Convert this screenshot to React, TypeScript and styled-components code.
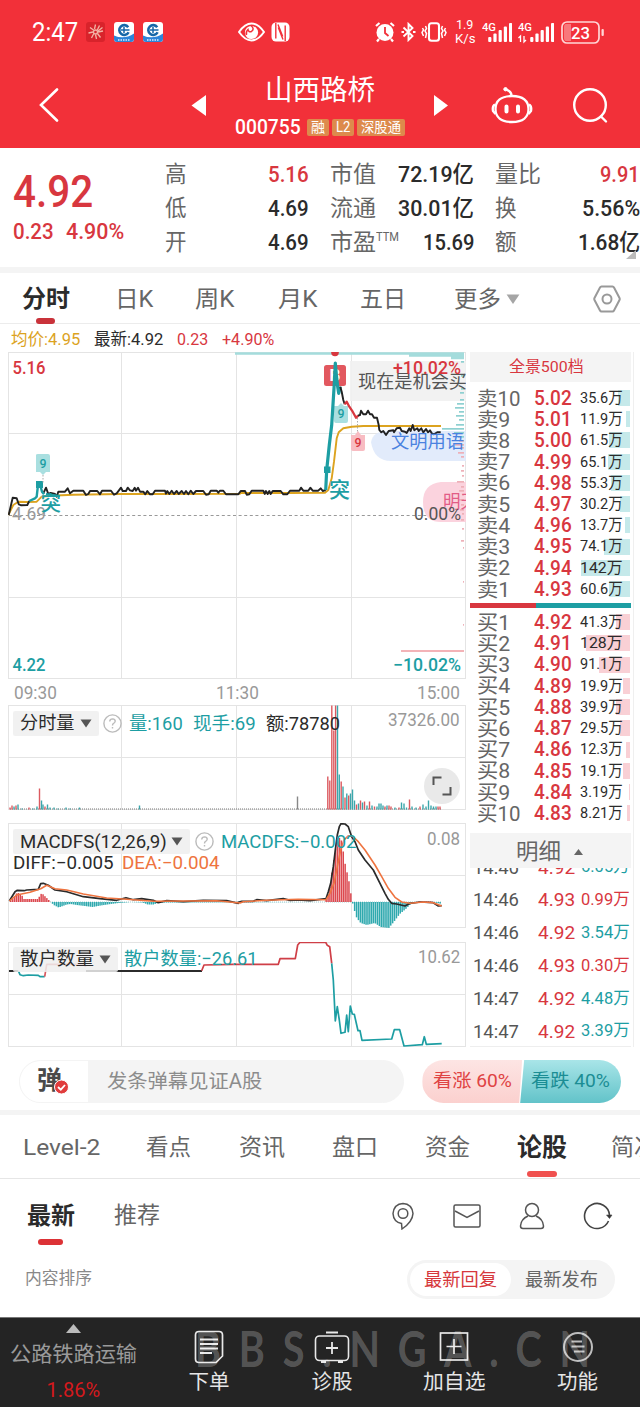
import React, { useLayoutEffect, useRef } from "react";
import styled, { createGlobalStyle } from "styled-components";

const RED = "#d8373f";
const TEAL = "#1d9ea3";
const DARK = "#2b2b2b";
const GREY = "#666";
const GOLD = "#dca31f";
const ORANGE = "#ee7440";
const FONT = `Roboto, "Noto Sans CJK SC", sans-serif`;

const Global = createGlobalStyle`
  * { box-sizing: border-box; }
  body { margin: 0; background: #fff; font-family: ${FONT}; color: ${DARK}; }
  svg { display: block; }
`;

/* ---------- condensed text that always fills its column width ---------- */
const TextBox = styled.span<{ $w: number; $size: number; $color: string; $weight: number }>`
  display: block;
  flex: none;
  width: ${(p) => p.$w}px;
  height: ${(p) => p.$size}px;
  line-height: ${(p) => p.$size}px;
  font-size: ${(p) => p.$size}px;
  font-weight: ${(p) => p.$weight};
  color: ${(p) => p.$color};
  white-space: nowrap;
`;
const TextInner = styled.span`
  display: inline-block;
  vertical-align: top;
  transform-origin: 0 50%;
`;
type TextProps = { w: number; size: number; color?: string; weight?: number; children: React.ReactNode };
function Text({ w, size, color = DARK, weight = 400, children }: TextProps) {
  const ref = useRef<HTMLSpanElement>(null);
  useLayoutEffect(() => {
    const el = ref.current;
    if (el) el.style.transform = `scaleX(${w / el.offsetWidth})`;
  }, [w, size, children]);
  return (
    <TextBox $w={w} $size={size} $color={color} $weight={weight}>
      <TextInner ref={ref}>{children}</TextInner>
    </TextBox>
  );
}

/* ---------- page and header ---------- */
const Page = styled.div`
  width: 640px;
  height: 1407px;
  overflow: hidden;
  display: flex;
  flex-direction: column;
  background: #fff;
`;
const Header = styled.header`
  height: 148px;
  flex: none;
  background: #f23039;
  padding-top: 16px;
`;
const StatusBar = styled.div`
  height: 32px;
  display: flex;
  align-items: center;
  padding-left: 32px;
`;
const Gap = styled.div<{ $w: number }>`
  width: ${(p) => p.$w}px;
  flex: none;
`;
const Speed = styled.div`
  display: flex;
  flex-direction: column;
  align-items: center;
  gap: 1px;
  width: 21px;
`;
const TitleBar = styled.div`
  height: 100px;
  display: grid;
  grid-template-columns: 190px 45px 170px 30px 57px 148px;
  align-items: start;
`;
const NavIcon = styled.div<{ $left: number; $top: number }>`
  padding-left: ${(p) => p.$left}px;
  padding-top: ${(p) => p.$top}px;
`;
const TitleBlock = styled.div`
  padding-top: 29px;
  display: flex;
  flex-direction: column;
`;
const TitleName = styled.div`
  padding-left: 30px;
`;
const CodeRow = styled.div`
  display: flex;
  align-items: center;
  margin-top: 13px;
  gap: 3px;
  height: 18px;
`;
const Tag = styled.span`
  height: 17px;
  border-radius: 2px;
  background: #dd8a4c;
  padding: 0 4px;
  display: flex;
  align-items: center;
`;

/* ---------- quote ---------- */
const Quote = styled.section`
  height: 119px;
  flex: none;
  display: grid;
  grid-template-columns: 165px 165px 165px 145px;
  position: relative;
`;
const PriceCell = styled.div`
  padding: 21px 0 0 13px;
`;
const ChangeRow = styled.div`
  display: flex;
  gap: 12px;
  margin-top: 6px;
`;
const StatCol = styled.dl<{ $w: number }>`
  margin: 0;
  padding-top: 9px;
  width: ${(p) => p.$w}px;
`;
const StatRow = styled.div`
  height: 34px;
  display: flex;
  align-items: center;
  justify-content: space-between;
`;
const LabelGroup = styled.div`
  display: flex;
  align-items: flex-start;
`;
const Corner = styled.i`
  position: absolute;
  right: 4px;
  bottom: 8px;
  border-left: 10px solid transparent;
  border-bottom: 9px solid #bbb;
`;
const Band = styled.div<{ $h: number }>`
  height: ${(p) => p.$h}px;
  flex: none;
  background: #f4f4f4;
`;

/* ---------- tabs ---------- */
const PeriodTabs = styled.nav`
  height: 51px;
  flex: none;
  display: grid;
  grid-template-columns: 93px 80px 83px 82px 94px 139px 40px;
  padding: 2px 0 0 22px;
  align-items: center;
  border-bottom: 1px solid #ececec;
`;
const Tab = styled.div<{ $mark?: string; $markTop?: number; $markLeft?: number; $markW?: number }>`
  position: relative;
  display: flex;
  align-items: center;
  gap: 5px;
  ${(p) =>
    p.$mark &&
    `&::after {
      content: "";
      position: absolute;
      left: ${p.$markLeft}px;
      top: ${p.$markTop}px;
      width: ${p.$markW}px;
      height: 6px;
      border-radius: 3px;
      background: ${p.$mark};
    }`}
`;
const InfoLine = styled.div`
  height: 28px;
  flex: none;
  display: flex;
  align-items: center;
  padding: 3px 0 0 11px;
`;

/* ---------- market area ---------- */
const Market = styled.main`
  height: 698px;
  flex: none;
  display: grid;
  grid-template-columns: 458px 164px;
  grid-template-rows: 695px;
  column-gap: 4px;
  padding-left: 8px;
`;
const Charts = styled.div`
  display: flex;
  flex-direction: column;
`;
const Axis = styled.div`
  height: 26px;
  display: flex;
  justify-content: space-between;
  align-items: center;
  padding: 1px 6px 0;
`;
const Panel = styled.div<{ $gap?: number }>`
  position: relative;
  margin-bottom: ${(p) => p.$gap ?? 0}px;
`;
const PanelHead = styled.div<{ $top: number }>`
  position: absolute;
  left: 5px;
  top: ${(p) => p.$top}px;
  display: flex;
  align-items: center;
`;
const Chip = styled.div<{ $w: number }>`
  width: ${(p) => p.$w}px;
  height: 25px;
  background: rgba(238, 238, 238, 0.85);
  border-radius: 2px;
  display: flex;
  align-items: center;
  justify-content: space-between;
  padding: 0 7px;
`;
const ScaleLabel = styled.div<{ $top: number }>`
  position: absolute;
  right: 6px;
  top: ${(p) => p.$top}px;
`;
const SubHead = styled.div`
  position: absolute;
  left: 5px;
  top: 31px;
  display: flex;
  gap: 9px;
`;
const Expand = styled.div`
  position: absolute;
  right: 6px;
  top: 63px;
  width: 36px;
  height: 36px;
  border-radius: 50%;
  background: #e9e9e9;
  display: grid;
  place-items: center;
`;

const Book = styled.aside`
  display: flex;
  flex-direction: column;
  min-height: 0;
  border-right: 1px solid #efefef;
  padding-right: 2px;
`;
const BookHead = styled.div<{ $h: number; $shift?: number }>`
  height: ${(p) => p.$h}px;
  flex: none;
  background: #f4f4f4;
  display: flex;
  align-items: center;
  justify-content: center;
  gap: 13px;
  padding-right: ${(p) => p.$shift ?? 0}px;
  padding-top: 2px;
`;
const Levels = styled.div<{ $top: number; $bottom?: number }>`
  padding-top: ${(p) => p.$top}px;
  padding-bottom: ${(p) => p.$bottom ?? 0}px;
`;
const Level = styled.div`
  height: 21.22px;
  display: grid;
  grid-template-columns: 57px 46px 50px;
  padding-left: 7px;
  align-items: center;
  position: relative;
`;
const Depth = styled.i<{ $w: number; $bg: string }>`
  position: absolute;
  right: 1px;
  top: 2px;
  height: 16px;
  width: ${(p) => p.$w}px;
  background: ${(p) => p.$bg};
`;
const Ratio = styled.div`
  height: 5px;
  margin-top: 3px;
  display: grid;
  grid-template-columns: 66px 95px;
`;
const RatioPart = styled.i<{ $bg: string }>`
  background: ${(p) => p.$bg};
`;
const Trades = styled.div`
  flex: 1;
  min-height: 0;
  overflow: hidden;
  display: flex;
  flex-direction: column;
  justify-content: flex-end;
  border-bottom: 1px solid #eee;
`;
const Trade = styled.div`
  height: 32.8px;
  flex: none;
  display: grid;
  grid-template-columns: 65px 43px 50px;
  padding-left: 3px;
  align-items: center;
  &:last-child { margin-bottom: -2px; }
`;

/* ---------- comment bar ---------- */
const CommentBar = styled.div`
  height: 60px;
  flex: none;
  display: flex;
  padding: 10px 19px 0;
`;
const CommentInput = styled.div`
  width: 386px;
  height: 43px;
  border-radius: 22px;
  background: #f4f4f4;
  overflow: hidden;
  display: flex;
  align-items: center;
  border: 1px solid #f4f4f4;
`;
const BulletToggle = styled.div`
  width: 68px;
  height: 43px;
  background: #fff;
  padding: 2px 0 0 16px;
  margin-right: 19px;
`;
const VoteGroup = styled.div`
  margin-left: 18px;
  width: 199px;
  height: 43px;
  border-radius: 22px;
  overflow: hidden;
  display: flex;
`;
const Vote = styled.div<{ $up?: boolean }>`
  width: ${(p) => (p.$up ? 100 : 102)}px;
  height: 43px;
  margin-left: ${(p) => (p.$up ? 0 : -3)}px;
  display: flex;
  align-items: center;
  padding-left: ${(p) => (p.$up ? 11 : 12)}px;
  background: ${(p) =>
    p.$up ? "linear-gradient(#fde5e4, #fbd0ce)" : "linear-gradient(#a9e5e8, #62c3c9)"};
  clip-path: ${(p) =>
    p.$up ? "polygon(0 0, 100% 0, 97% 100%, 0 100%)" : "polygon(5px 0, 100% 0, 100% 100%, 1px 100%)"};
`;

/* ---------- forum ---------- */
const ForumTabs = styled.nav`
  height: 64px;
  flex: none;
  display: grid;
  grid-template-columns: 123px 93px 93px 93px 92px 94px 60px;
  padding: 2px 0 0 23px;
  align-items: center;
  border-bottom: 1px solid #e6e6e6;
`;
const FilterRow = styled.div`
  height: 73px;
  flex: none;
  display: grid;
  grid-template-columns: 87px 277px 62px 66px 64px 40px;
  padding-left: 27px;
  align-items: center;
`;
const SortRow = styled.div`
  height: 65px;
  flex: none;
  display: flex;
  justify-content: space-between;
  padding: 8px 25px 0 25px;
`;
const SortLabel = styled.div`
  padding-top: 11px;
`;
const Segmented = styled.div`
  width: 208px;
  height: 39px;
  border-radius: 20px;
  background: #f4f4f4;
  padding: 3px;
  display: flex;
`;
const Segment = styled.div<{ $on?: boolean }>`
  width: 101px;
  height: 33px;
  border-radius: 17px;
  background: ${(p) => (p.$on ? "#fff" : "transparent")};
  display: flex;
  align-items: center;
  padding-left: 14px;
`;

/* ---------- bottom bar ---------- */
const BottomBar = styled.footer`
  height: 90px;
  flex: none;
  position: relative;
  background: #242424;
  border-top: 1px solid #777;
  display: grid;
  grid-template-columns: 147px 124px 122px 122px 125px;
`;
const Sector = styled.div`
  display: flex;
  flex-direction: column;
  align-items: center;
  padding-top: 6px;
`;
const SectorName = styled.div`
  margin: 11px 0 15px;
`;
const Action = styled.div`
  display: flex;
  flex-direction: column;
  align-items: center;
  padding-top: 12px;
  gap: 8px;
`;
const Watermark = styled.div`
  position: absolute;
  left: 195px;
  top: 6px;
  font-family: Lato, sans-serif;
  letter-spacing: 22px;
  pointer-events: none;
`;

/* ---------- svg helpers ---------- */
type P = [number, number][];
const line = (pts: P) => pts.map(([x, y]) => `${x.toFixed(1)},${y.toFixed(1)}`).join(" ");
const at = (ox: number, oy: number, s: string): P =>
  s.split(" ").map((t) => {
    const [a, b] = t.split(",").map(Number);
    return [ox + a / 3, oy + b / 3];
  });

function Label(p: { x: number; y: number; w: number; size: number; fill: string; weight?: number; children: string }) {
  return (
    <text
      x={p.x}
      y={p.y + p.size * 0.36}
      textLength={p.w}
      lengthAdjust="spacingAndGlyphs"
      fontSize={p.size}
      fill={p.fill}
      fontWeight={p.weight ?? 400}
    >
      {p.children}
    </text>
  );
}

function Grid({ top, bottom, rows }: { top: number; bottom: number; rows: number[] }) {
  return (
    <g stroke="#e4e4e4" strokeWidth="1" fill="none">
      <rect x="8.5" y={top + 0.5} width="457" height={bottom - top - 1} />
      {[121.5, 236.5, 351.5].map((x) => (
        <line key={x} x1={x} x2={x} y1={top} y2={bottom} />
      ))}
      {rows.map((y) => (
        <line key={y} x1="8" x2="466" y1={y} y2={y} />
      ))}
    </g>
  );
}

/* ---------- price chart ---------- */
const priceOpen = at(0, 345, "26,510 38,458 50,460 56,478 64,481 82,480 88,468");
const priceRise = at(0, 345, "88,468 105,460 110,455 114,420 120,418 126,440 132,448");
const priceFlat = [
  ...at(
    0,
    345,
    "130,445 138,428 145,447 152,444 165,447 170,455 175,440 195,440 203,430 210,445 220,437 250,437 258,450 265,447 270,438 292,438 300,448 306,437 333,437 342,449 350,445 363,428 368,438 378,438 383,428 390,436 398,438 404,428 408,437 414,428 420,440 430,440 436,448 442,438 450,448 458,448 465,437 495,437 498,446 502,438 508,447 515,437 522,447 530,438 536,447 545,438 552,447 558,438 565,448 572,437 580,447 588,438 610,438 618,449 626,448 632,437 650,437 655,443 660,437 670,437 678,448 715,448"
  ),
  ...at(
    230,
    345,
    "25,448 32,438 45,438 50,449 58,448 65,437 100,437 104,447 108,438 113,447 118,438 122,447 128,438 152,438 160,448 172,448 180,437 208,437 213,428 220,437 235,437 241,428 248,437 265,437 272,430 278,438 287,435"
  ),
];
const priceSurge = at(230, 345, "287,435 290,375 298,300 305,240 312,130 316,54 320,100 323,125 326,145 331,125");
const priceDrop = at(230, 345, "331,125 335,140 340,165 344,178");
const priceRed = at(230, 345, "344,178 350,170 358,185 368,200 378,218 385,212");
const priceTail = at(
  230,
  345,
  "384,212 390,210 393,197 400,208 408,208 414,197 420,208 426,208 432,218 441,218 446,240 448,255 454,262 460,258 468,270 476,258 490,256 492,262 500,250 510,248 515,258 525,260 530,264 538,250 542,258 548,240 553,256 562,250 566,258 574,250 580,262 588,252 594,262 600,256 605,265 612,268 622,262 632,262"
);
const average = [
  ...at(0, 345, "25,510 40,480 55,470 80,471 110,470 125,455 150,452 220,449 360,447 500,447 720,446"),
  ...at(230, 345, "30,444 180,444 285,443 295,435 305,400 312,350 320,280 326,262 340,250 365,245 400,243 633,243"),
];
const ladder: [number, number, string][] = [
  [361, 3, "t"], [375, 3, "t"], [388, 3, "t"], [392, 4, "t"], [399, 4, "t"], [403, 7, "t"], [407, 9, "t"],
  [411, 5, "t"], [415, 8, "t"], [419, 5, "t"], [424, 8, "t"], [428, 22, "t"], [432, 10, "t"], [436, 6, "t"],
  [440, 5, "r"], [444, 9, "r"], [447, 4, "r"], [452, 6, "r"], [456, 3, "r"], [465, 2, "r"], [470, 3, "r"],
  [475, 2, "r"], [481, 7, "r"], [486, 3, "r"], [490, 5, "r"], [494, 2, "r"], [499, 5, "r"], [504, 3, "r"],
  [509, 4, "r"], [513, 2, "r"], [519, 3, "r"], [528, 2, "r"], [540, 3, "r"], [547, 1, "r"], [581, 1, "r"], [624, 1, "r"],
];

function PriceChart() {
  return (
    <svg width="458" height="327" viewBox="8 352 458 327" fontFamily={FONT}>
      <Grid top={352} bottom={679} rows={[433.5, 597.5]} />
      <line x1="9" x2="464" y1="515.5" y2="515.5" stroke="#999" strokeDasharray="3 2.6" />
      <path d="M235 353.5H464M409 355.5H464M451 358H464" stroke="#a4dcdc" strokeWidth="2.4" />
      <rect x="350" y="361" width="116" height="40" fill="#f1f1f1" fillOpacity=".9" />
      <path d="M466 431H388Q373 431 371 442Q374 461 391 461H466Z" fill="#dfe9fb" fillOpacity=".9" />
      <path d="M466 482H441Q423 484 423 502Q423 522 441 522H466Z" fill="#fbd3de" />
      {ladder.map(([y, w, c]) => (
        <rect key={y} x={464 - w} y={y} width={w} height="1.7" fill={c === "t" ? "#8ed0d1" : "#eeb0b8"} />
      ))}
      <line x1="401" x2="464" y1="651" y2="651" stroke="#ef9a9f" strokeWidth="1.6" />
      <g fill="none" strokeLinejoin="round" strokeWidth="1.9">
        <polyline points={line(average)} stroke={GOLD} />
        <polyline points={line(priceOpen)} stroke="#222" />
        <polyline points={line(priceFlat)} stroke="#222" />
        <polyline points={line(priceRise)} stroke={TEAL} strokeWidth="2.4" />
      </g>
      <path d="M46 494L60 496" stroke={TEAL} strokeWidth="2" />
      <rect x="36" y="481" width="7" height="7" fill={TEAL} />
      <path d="M43 475V484M357.5 418V433" stroke="#aaa" strokeDasharray="1.5 1.5" />
      <path d="M36 455Q36 454 38 454H48Q50 454 50 456V472H46L43 475L40 472H36Z" fill="#a9dfe0" />
      <Label x={39.5} y={463} w={7} size={13} fill={TEAL} weight={500}>9</Label>
      <rect x="324" y="365" width="22" height="21" rx="2.5" fill="#e2585f" />
      <Label x={329.5} y={375.5} w={11} size={16} fill="#fff" weight={700}>B</Label>
      <path d="M334 406H338L341 403L344 406H348V421Q348 423 346 423H336Q334 423 334 421Z" fill="#a9dfe0" />
      <Label x={337.5} y={413} w={7} size={13} fill={TEAL} weight={500}>9</Label>
      <path d="M351 435H355L358 431L361 435H365V449Q365 451 363 451H353Q351 451 351 449Z" fill="#f8bcc2" />
      <Label x={354.5} y={442} w={7} size={13} fill={RED} weight={500}>9</Label>
      <circle cx="335" cy="352.5" r="3.8" fill={RED} />
      <g fill="none" strokeLinejoin="round" strokeWidth="1.9">
        <polyline points={line(priceSurge)} stroke={TEAL} strokeWidth="3.2" />
        <polyline points={line(priceDrop)} stroke="#222" />
        <polyline points={line(priceRed)} stroke={RED} strokeWidth="2.3" />
        <polyline points={line(priceTail)} stroke="#222" />
      </g>
      <rect x="324" y="466.5" width="6.5" height="6.5" fill={TEAL} />
      <Label x={12} y={513.5} w={34} size={18} fill="#999">4.69</Label>
      <Label x={40.5} y={504} w={20.5} size={20.5} fill={TEAL} weight={500}>突</Label>
      <Label x={329} y={489} w={21} size={21} fill={TEAL} weight={500}>突</Label>
      <Label x={358} y={381} w={109} size={18.5} fill="#555">现在是机会买</Label>
      <Label x={391} y={442} w={73} size={18} fill="#4a82e0">文明用语</Label>
      <Label x={443} y={502} w={35} size={18} fill="#e25c86">明天</Label>
      <Label x={12.5} y={367.5} w={33} size={18} fill={RED} weight={500}>5.16</Label>
      <Label x={393} y={367.5} w={68} size={18} fill={RED} weight={500}>+10.02%</Label>
      <Label x={12.5} y={664.5} w={33} size={18} fill={TEAL} weight={500}>4.22</Label>
      <Label x={393} y={664.5} w={68} size={18} fill={TEAL} weight={500}>−10.02%</Label>
      <Label x={414} y={514} w={47} size={18} fill="#555">0.00%</Label>
    </svg>
  );
}

/* ---------- volume chart ---------- */
const bars: [number, number, string][] = [
  [10, 2, "r"], [12, 4, "r"], [14, 3, "t"], [16, 4, "r"], [18, 5, "t"], [22, 1, "t"], [29, 2, "r"], [33, 1, "t"], [37, 3, "t"],
  [39.5, 21, "r"], [41.5, 9, "t"], [43, 5, "t"], [45, 3, "r"], [47.5, 5, "t"], [50, 2, "t"], [54, 2, "t"], [58, 1, "t"], [66, 2, "t"],
  [70, 1, "t"], [79.5, 2, "t"], [139.5, 4, "t"], [297.5, 13, "k"],
  [327.8, 33, "r"], [329.8, 29, "r"], [331.8, 104, "r"], [333.8, 79, "r"], [335.6, 104, "r"], [337.5, 104, "t"], [339.3, 35, "t"],
  [341.2, 28, "r"], [343, 23, "t"], [345, 12, "r"], [346.8, 16, "t"], [348.7, 14, "r"], [350.5, 16, "t"], [352.5, 20, "t"],
  [354.5, 9, "t"], [356.5, 5, "r"], [358.5, 6, "t"], [360.5, 9, "r"], [362.5, 7, "t"], [364.5, 8, "r"], [367, 4, "t"], [369.5, 8, "r"],
  [372, 4, "t"], [374.5, 3, "r"], [377, 3, "t"], [379, 6, "t"], [381, 6, "t"], [383, 4, "t"], [385, 3, "r"], [387, 4, "t"], [389, 4, "r"], [391, 3, "r"],
  [395, 2, "t"], [399, 2, "r"], [401.5, 7, "t"], [404, 6, "t"], [406.5, 2, "t"], [409.5, 10, "r"], [412, 3, "t"], [416, 2, "t"], [420, 3, "r"],
  [423, 5, "t"], [426, 3, "t"], [428.5, 9, "t"], [431, 4, "t"], [433.5, 3, "t"], [436, 3, "t"], [438, 3, "r"], [440, 3, "r"],
];
const barColor: Record<string, string> = { r: "#dc5a60", t: "#3ba7ac", k: "#888" };

function VolumeChart() {
  return (
    <svg width="458" height="105" viewBox="8 705 458 105">
      <Grid top={705} bottom={810} rows={[757.5]} />
      <line x1="10" x2="441" y1="809" y2="809" stroke="#777" strokeWidth="1" strokeDasharray="1 1" />
      {bars.map(([x, h, c]) => (
        <rect key={x} x={x - 0.7} y={809.5 - h} width="1.4" height={h} fill={barColor[c]} />
      ))}
    </svg>
  );
}

/* ---------- MACD chart ---------- */
const interp = (pts: P, x: number) => {
  for (let i = 1; i < pts.length; i++)
    if (x <= pts[i][0]) {
      const [a, b] = [pts[i - 1], pts[i]];
      return a[1] + ((x - a[0]) / (b[0] - a[0])) * (b[1] - a[1]);
    }
  return 0;
};
const histEnvelope: P = [
  [9, 1], [12, 3], [16, 9], [18, 9], [21, 7], [23, 3], [30, 3], [37, 3], [41, 9], [44, 6], [48, 2], [50, 0], [53, -3], [58, -5.5],
  [66, -2.5], [70, -2], [76, -3], [84, -4], [92, -5], [100, -3.5], [110, -2], [118, -1], [130, 0], [142, -0.5], [147, -2.5],
  [153, -2.5], [158, -0.5], [324, 0], [326, 3], [329, 14], [332, 36], [335, 54], [338, 65], [341, 61], [344, 40], [348, 22], [351, 3],
  [353, -6], [356, -16], [360, -21], [366, -23], [374, -21], [380, -25], [388, -26], [393, -20], [399, -12], [405, -7], [410, -2], [418, 0.5], [430, 0.5], [441, -2],
];
const diffLine: P = [
  ...at(0, 700, "28,603 45,575 52,571 72,572 80,570 115,568 122,551 130,550 145,556 165,570 200,575 250,590 300,596 350,601 378,593 400,599 425,596 460,601 475,608 500,602 550,605 610,601 680,602 715,610"),
  ...at(230, 700, "20,608 35,604 70,604 80,599 110,602 160,596 180,601 205,600 240,602 288,596 295,575 302,550 310,500 316,450 322,405 328,380 333,371 345,372 355,380 365,410 375,425 385,450 405,480 430,510 450,550 465,580 475,598 485,610 500,612 525,618 540,610 570,606 610,608 625,618 635,617"),
];
const deaLine: P = [
  ...at(0, 700, "28,603 50,585 90,577 122,566 140,556 165,566 200,570 250,582 320,594 380,598 460,604 560,603 650,602 720,609"),
  ...at(230, 700, "40,605 110,601 205,598 288,599 300,580 312,550 322,500 332,450 342,420 355,407 367,408 385,425 405,450 435,495 455,530 475,565 495,592 515,606 540,610 580,606 610,608 635,618"),
];

function MacdChart() {
  const hist: P = [];
  for (let x = 10; x <= 441; x += 1.9) hist.push([x, interp(histEnvelope, x)]);
  return (
    <svg width="458" height="105" viewBox="8 823 458 105">
      <Grid top={823} bottom={928} rows={[875.5]} />
      <line x1="50" x2="441" y1="902" y2="902" stroke="#7fbcbe" strokeWidth=".7" strokeDasharray="1 1" />
      {hist.map(([x, v]) => (
        <rect key={x} x={x} y={v > 0 ? 902 - v : 902} width="1.5" height={Math.abs(v)} fill={v > 0 ? "#dc484f" : "#2fa9ae"} />
      ))}
      <polyline points={line(diffLine)} fill="none" stroke="#2b2b2b" strokeWidth="1.7" strokeLinejoin="round" />
      <polyline points={line(deaLine)} fill="none" stroke={ORANGE} strokeWidth="1.6" strokeLinejoin="round" />
    </svg>
  );
}

/* ---------- retail holders chart ---------- */
function RetailChart() {
  const tealA = at(0, 700, "55,812 60,824 70,827 85,825 115,826 120,830 134,830");
  const redA = at(0, 700, "134,830 140,793 250,793 258,800");
  const redB = [...at(0, 700, "605,812 612,795"), ...at(230, 700, "8,793 145,793 150,776 196,776 203,735 210,727 287,727 292,736 299,740 305,790")];
  const fall = at(
    230,
    700,
    "305,790 310,840 313,900 316,963 322,920 328,960 333,1000 345,997 350,945 355,995 361,918 367,942 373,943 384,992 390,992 396,1021 485,1017 493,989 509,989 522,1038 577,1034 583,1010 589,1033 635,1031"
  );
  return (
    <svg width="458" height="105" viewBox="8 942 458 105">
      <Grid top={942} bottom={1047} rows={[994.5]} />
      <g fill="none" strokeWidth="1.7" strokeLinejoin="round">
        <path d="M9 971H18M86 971H202" stroke="#2b2b2b" strokeWidth="2" />
        <polyline points={line(tealA)} stroke={TEAL} />
        <polyline points={line(redA)} stroke="#d75a60" />
        <polyline points={line(redB)} stroke="#cf3f47" />
        <polyline points={line(fall)} stroke={TEAL} />
      </g>
    </svg>
  );
}

const Down = ({ size = 12, fill = "#555" }: { size?: number; fill?: string }) => (
  <svg width={size} height={size * 0.75} viewBox="0 0 12 9">
    <path d="M0.5 0.5H11.5L6 8.5Z" fill={fill} />
  </svg>
);
const Help = () => (
  <svg width="19" height="19" viewBox="0 0 19 19" fill="none" stroke="#bbb" strokeWidth="1.4">
    <circle cx="9.5" cy="9.5" r="8.6" />
    <path d="M6.7 7.5Q6.900 4.900 9.600 4.900Q12.300 5.100 12.200 7.300Q12.100 8.700 10.300 9.600Q9.500 10.100 9.500 11.500M9.500 13V14.500" />
  </svg>
);

/* ---------- status icons ---------- */
const BankIcon = () => (
  <svg width="20" height="20" viewBox="0 0 20 20">
    <rect width="20" height="20" rx="3" fill="#fff" />
    <path d="M0 13.500Q10 18 20 11.500V17Q20 20 17 20H3Q0 20 0 17Z" fill="#2d84d8" />
    <path d="M14.200 5.200A4.900 4.900 0 1 0 14.600 10.200" fill="none" stroke="#1767a8" strokeWidth="2.600" />
    <path d="M10 5V11M7 8H15.500" stroke="#1767a8" strokeWidth="1.500" />
    <path d="M4 18H16" stroke="#d9edff" strokeWidth="1.400" strokeDasharray="1.500 1" />
  </svg>
);
const Bars = ({ w, n, arrows }: { w: number; n: number; arrows?: boolean }) => (
  <svg width={w} height="23" viewBox={`0 0 ${w} 23`} fontFamily={FONT}>
    <text x="0" y="10" fontSize="11.5" fontWeight="500" fill="#fff" textLength="14" lengthAdjust="spacingAndGlyphs">4G</text>
    {Array.from({ length: n }, (_, i) => {
      const h = 5 + (i * 14) / (n - 1);
      return <rect key={i} x={w - 3 - (n - 1 - i) * 5.2} y={21 - h} width="3.2" height={h} rx="1" fill="#fff" />;
    })}
    {arrows && <path d="M2.500 21V15L0.500 17M6 15V21L8 19" stroke="#fff" strokeWidth="1.300" fill="none" />}
  </svg>
);

function Status() {
  return (
    <StatusBar>
      <Text w={46} size={25} color="#fff">2:47</Text>
      <Gap $w={8} />
      <svg width="19" height="20" viewBox="0 0 19 20">
        <rect width="19" height="20" rx="3" fill="#d8232b" />
        <g stroke="#f3b5a6" strokeWidth="1.300" fill="none">
          <path d="M9.500 2.500L8.500 7M9.500 12.500L10.500 17M2.500 11L7 10M12 10L17 9M4 5.500L7.800 8.200M11.500 11.500L14.500 15.500M13.500 3.500L11.300 8M7.800 11.500L5.500 16M16.500 5.500L12 9" />
          <circle cx="9.500" cy="10" r="2" />
        </g>
      </svg>
      <Gap $w={9} />
      <BankIcon />
      <Gap $w={9} />
      <BankIcon />
      <Gap $w={75} />
      <svg width="27" height="20" viewBox="0 0 27 20">
        <path d="M1 10Q7 1.500 13.500 1.500T26 10Q20 18.500 13.500 18.500T1 10Z" fill="none" stroke="#fff" strokeWidth="2" />
        <circle cx="13.500" cy="10.500" r="6.600" fill="#fff" />
        <path d="M13 3.500Q17 7 13.500 9.500Q10.500 10.500 10 7.500Q7.500 10 8.500 13" fill="none" stroke="#f23039" strokeWidth="1.500" />
      </svg>
      <Gap $w={6} />
      <svg width="19" height="20" viewBox="0 0 19 20">
        <rect x="0.500" y="0.500" width="18" height="19" rx="4.500" fill="#fff" />
        <path d="M4.800 1V16.500M7.300 5.500L12 17.500M14.200 19V3.500M11.700 14.500L7 2.500" stroke="#f23039" strokeWidth="1.400" fill="none" />
      </svg>
      <Gap $w={84} />
      <svg width="22" height="22" viewBox="0 0 22 22">
        <circle cx="11" cy="11.500" r="8.500" fill="#fff" />
        <path d="M2 5L5.500 2M20 5L16.500 2M5 18L3 20.500M17 18L19 20.500" stroke="#fff" strokeWidth="2.200" />
        <path d="M11 6V12L14.500 15" stroke="#f23039" strokeWidth="1.800" fill="none" />
      </svg>
      <Gap $w={5} />
      <svg width="15" height="20" viewBox="0 0 15 20" fill="none" stroke="#fff" strokeWidth="1.900">
        <path d="M2.500 5.500L11.500 14L7.500 18V2L11.500 6L2.500 14.500" />
        <path d="M0.500 10H3M12 10H14.500" />
      </svg>
      <Gap $w={5} />
      <svg width="26" height="20" viewBox="0 0 26 20" fill="none" stroke="#fff">
        <rect x="8" y="1.200" width="10" height="17.600" rx="2.500" strokeWidth="2.100" />
        <path d="M4.500 4L5.500 6.500L4 9L5.500 11.500L4.500 16M1.500 6L2.500 8L1 10.500L2.500 14M21.500 4L20.500 6.500L22 9L20.500 11.500L21.500 16M24.500 6L23.500 8L25 10.500L23.500 14" strokeWidth="1.500" />
      </svg>
      <Gap $w={7} />
      <Speed>
        <Text w={17} size={12.5} color="#fff">1.9</Text>
        <Text w={20} size={12.5} color="#fff">K/s</Text>
      </Speed>
      <Gap $w={7} />
      <Bars w={30} n={5} />
      <Gap $w={6} />
      <Bars w={36} n={5} arrows />
      <Gap $w={7} />
      <svg width="44" height="23" viewBox="0 0 44 23" fontFamily={FONT}>
        <rect x="1" y="1" width="37" height="21" rx="5" fill="none" stroke="#ffd6d6" strokeWidth="1.700" />
        <path d="M5 3H10V20H5Q3 20 3 17V6Q3 3 5 3Z" fill="#f8777b" />
        <rect x="40.500" y="8" width="2.300" height="7" rx="1" fill="#ffd6d6" />
        <text x="10" y="17.500" fontSize="17" fill="#fff" fontWeight="500" textLength="19" lengthAdjust="spacingAndGlyphs">23</text>
      </svg>
    </StatusBar>
  );
}

const sells: [string, string, number][] = [
  ["卖10", "5.02", 35.6], ["卖9", "5.01", 11.9], ["卖8", "5.00", 61.5], ["卖7", "4.99", 65.1], ["卖6", "4.98", 55.3],
  ["卖5", "4.97", 30.2], ["卖4", "4.96", 13.7], ["卖3", "4.95", 74.1], ["卖2", "4.94", 142], ["卖1", "4.93", 60.6],
];
const buys: [string, string, number][] = [
  ["买1", "4.92", 41.3], ["买2", "4.91", 128], ["买3", "4.90", 91.1], ["买4", "4.89", 19.9], ["买5", "4.88", 39.9],
  ["买6", "4.87", 29.5], ["买7", "4.86", 12.3], ["买8", "4.85", 19.1], ["买9", "4.84", 3.19], ["买10", "4.83", 8.21],
];
const trades: [string, string, string, string][] = [
  ["14:46", "4.92", "6.05万", TEAL], ["14:46", "4.93", "0.99万", RED], ["14:46", "4.92", "3.54万", TEAL],
  ["14:46", "4.93", "0.30万", RED], ["14:47", "4.92", "4.48万", TEAL], ["14:47", "4.92", "3.39万", TEAL],
];

function LevelRow({ row, bg }: { row: [string, string, number]; bg: string }) {
  const [name, price, vol] = row;
  return (
    <Level>
      <Depth $w={(vol / 142) * 49} $bg={bg} />
      <Text w={name.length === 3 ? 43 : 33} size={20} color={GREY}>{name}</Text>
      <Text w={38} size={19.5} color={RED} weight={500}>{price}</Text>
      <Text w={43} size={15.5}>{`${vol}万`}</Text>
    </Level>
  );
}

type Stat = { label: string; lw: number; value: string; vw: number; up?: boolean; sup?: string };
const stats: { w: number; rows: Stat[] }[] = [
  { w: 144, rows: [
    { label: "高", lw: 22, value: "5.16", vw: 41, up: true },
    { label: "低", lw: 22, value: "4.69", vw: 41 },
    { label: "开", lw: 22, value: "4.69", vw: 41 },
  ] },
  { w: 144, rows: [
    { label: "市值", lw: 46, value: "72.19亿", vw: 76 },
    { label: "流通", lw: 46, value: "30.01亿", vw: 76 },
    { label: "市盈", lw: 46, value: "15.69", vw: 51, sup: "TTM" },
  ] },
  { w: 145, rows: [
    { label: "量比", lw: 46, value: "9.91", vw: 40, up: true },
    { label: "换", lw: 22, value: "5.56%", vw: 58 },
    { label: "额", lw: 22, value: "1.68亿", vw: 62 },
  ] },
];

const navIcons = {
  order: (
    <svg width="30" height="34" viewBox="0 0 30 34" fill="none" stroke="#e8e8e8" strokeWidth="1.700">
      <path d="M5 1.500H25Q28.500 1.500 28.500 5V26L22 32.500H5Q1.500 32.500 1.500 29V5Q1.500 1.500 5 1.500Z" />
      <path d="M6 9.500H24M6 14H24M6 18.500H24M6 23H18" strokeWidth="2" />
    </svg>
  ),
  doctor: (
    <svg width="36" height="34" viewBox="0 0 36 34" fill="none" stroke="#e8e8e8" strokeWidth="1.600">
      <rect x="1.500" y="6" width="33" height="24.500" rx="4" />
      <path d="M12 2.500H24M18 12V24M12 18H24M7 32H12M24 32H29" strokeWidth="1.800" />
    </svg>
  ),
  add: (
    <svg width="30" height="34" viewBox="0 0 30 34" fill="none" stroke="#e8e8e8" strokeWidth="1.700">
      <rect x="1.500" y="3" width="27" height="27" />
      <path d="M15 9V24M7.500 16.500H22.500" />
    </svg>
  ),
  more: (
    <svg width="32" height="34" viewBox="0 0 32 34" fill="none" stroke="#bdbdbd" strokeWidth="2">
      <circle cx="16" cy="17" r="14" />
      <path d="M9.500 11.500H20M9.500 16.500H22.500M12 21.500H22.500" strokeWidth="2.200" />
    </svg>
  ),
};

export default function App() {
  return (
    <Page>
      <Global />
      <Header>
        <Status />
        <TitleBar>
          <NavIcon $left={39} $top={40}>
            <svg width="20" height="34" viewBox="0 0 20 34" fill="none" stroke="#fff" strokeWidth="2.600" strokeLinecap="round">
              <path d="M18 1.500L2 17L18 32.500" />
            </svg>
          </NavIcon>
          <NavIcon $left={1} $top={47}>
            <svg width="15" height="21" viewBox="0 0 15 21"><path d="M15 0V21L0.500 10.500Z" fill="#fff" /></svg>
          </NavIcon>
          <TitleBlock>
            <TitleName><Text w={110} size={28} color="#fff">山西路桥</Text></TitleName>
            <CodeRow>
              <Text w={66} size={21} color="#fff" weight={500}>000755</Text>
              <Gap $w={0} />
              <Tag><Text w={14} size={14} color="#fff">融</Text></Tag>
              <Tag><Text w={14} size={14} color="#fff">L2</Text></Tag>
              <Tag><Text w={40} size={14} color="#fff">深股通</Text></Tag>
            </CodeRow>
          </TitleBlock>
          <NavIcon $left={29} $top={47}>
            <svg width="15" height="21" viewBox="0 0 15 21"><path d="M0 0V21L14 10.500Z" fill="#fff" /></svg>
          </NavIcon>
          <NavIcon $left={56} $top={38}>
            <svg width="42" height="39" viewBox="0 0 42 39" fill="none" stroke="#fff" strokeWidth="2.300">
              <path d="M21 10C32 10 37.500 15 37.500 23S32 36 21 36S4.500 31 4.500 23S10 10 21 10Z" />
              <path d="M4 18.500Q1 20 2 25L4.500 28M38 18.500Q41 20 40 25L37.500 28M20.500 9.500Q20.500 5.500 15 3.500" />
              <circle cx="14.500" cy="3.200" r="1.700" fill="#fff" strokeWidth="1" />
              <path d="M15.500 20.500V25.500M27 20.500V25.500" strokeWidth="4" strokeLinecap="round" />
            </svg>
          </NavIcon>
          <NavIcon $left={80} $top={40}>
            <svg width="36" height="36" viewBox="0 0 36 36" fill="none" stroke="#fff" strokeWidth="2.400" strokeLinecap="round">
              <circle cx="18" cy="17" r="15.800" />
              <path d="M29 28.500L34 33.500" />
            </svg>
          </NavIcon>
        </TitleBar>
      </Header>

      <Quote>
        <PriceCell>
          <Text w={80} size={45} color={RED} weight={500}>4.92</Text>
          <ChangeRow>
            <Text w={41} size={22.5} color={RED} weight={500}>0.23</Text>
            <Text w={58} size={22.5} color={RED} weight={500}>4.90%</Text>
          </ChangeRow>
        </PriceCell>
        {stats.map((col, i) => (
          <StatCol key={i} $w={col.w}>
            {col.rows.map((r) => (
              <StatRow key={r.label}>
                <LabelGroup>
                  <Text w={r.lw} size={22.5} color={GREY}>{r.label}</Text>
                  {r.sup && <Text w={23} size={12.5} color={GREY}>{r.sup}</Text>}
                </LabelGroup>
                <Text w={r.vw} size={22.5} color={r.up ? RED : DARK} weight={500}>{r.value}</Text>
              </StatRow>
            ))}
          </StatCol>
        ))}
        <Corner />
      </Quote>
      <Band $h={6} />

      <PeriodTabs>
        <Tab $mark="#c9323a" $markTop={31} $markLeft={14} $markW={19}><Text w={48} size={24} weight={700}>分时</Text></Tab>
        <Tab><Text w={38} size={23} color={GREY}>日K</Text></Tab>
        <Tab><Text w={39} size={23} color={GREY}>周K</Text></Tab>
        <Tab><Text w={39} size={23} color={GREY}>月K</Text></Tab>
        <Tab><Text w={46} size={23} color={GREY}>五日</Text></Tab>
        <Tab><Text w={47} size={23} color={GREY}>更多</Text><Down size={14} fill="#a5a5a5" /></Tab>
        <svg width="28" height="28" viewBox="0 0 28 28" fill="none" stroke="#999" strokeWidth="2">
          <path d="M8.500 1.500H19.500Q20.500 1.500 21 2.500L26.500 13Q27 14 26.500 15L21 25.500Q20.500 26.500 19.500 26.500H8.500Q7.500 26.500 7 25.500L1.500 15Q1 14 1.500 13L7 2.500Q7.500 1.500 8.500 1.500Z" />
          <circle cx="14" cy="14" r="4.500" />
        </svg>
      </PeriodTabs>
      <InfoLine>
        <Text w={69} size={17} color={GOLD}>均价:4.95</Text>
        <Gap $w={14} />
        <Text w={69} size={17}>最新:4.92</Text>
        <Gap $w={14} />
        <Text w={31} size={17} color={RED}>0.23</Text>
        <Gap $w={14} />
        <Text w={52} size={17} color={RED}>+4.90%</Text>
      </InfoLine>

      <Market>
        <Charts>
          <Panel><PriceChart /></Panel>
          <Axis>
            <Text w={43} size={18} color="#999">09:30</Text>
            <Text w={43} size={18} color="#999">11:30</Text>
            <Text w={43} size={18} color="#999">15:00</Text>
          </Axis>
          <Panel $gap={13}>
            <VolumeChart />
            <PanelHead $top={6}>
              <Chip $w={86}><Text w={55} size={18.5}>分时量</Text><Down /></Chip>
              <Gap $w={4} />
              <Help />
              <Gap $w={7} />
              <Text w={54} size={18} color={TEAL}>量:160</Text>
              <Gap $w={10} />
              <Text w={63} size={18} color={TEAL}>现手:69</Text>
              <Gap $w={10} />
              <Text w={74} size={18}>额:78780</Text>
            </PanelHead>
            <ScaleLabel $top={6}><Text w={72} size={18} color="#999">37326.00</Text></ScaleLabel>
            <Expand>
              <svg width="20" height="20" viewBox="0 0 20 20" fill="none" stroke="#555" strokeWidth="2">
                <path d="M1.500 9V1.500H9.500M18.500 11V18.500H10.500" />
              </svg>
            </Expand>
          </Panel>
          <Panel $gap={14}>
            <MacdChart />
            <PanelHead $top={6}>
              <Chip $w={177}><Text w={147} size={18}>MACDFS(12,26,9)</Text><Down /></Chip>
              <Gap $w={5} />
              <Help />
              <Gap $w={7} />
              <Text w={136} size={18} color={TEAL}>MACDFS:−0.002</Text>
            </PanelHead>
            <SubHead>
              <Text w={100} size={18}>DIFF:−0.005</Text>
              <Text w={98} size={18} color={ORANGE}>DEA:−0.004</Text>
            </SubHead>
            <ScaleLabel $top={7}><Text w={33} size={18} color="#999">0.08</Text></ScaleLabel>
          </Panel>
          <Panel>
            <RetailChart />
            <PanelHead $top={5}>
              <Chip $w={105}><Text w={74} size={18.5}>散户数量</Text><Down /></Chip>
              <Gap $w={6} />
              <Text w={134} size={18.5} color={TEAL}>散户数量:−26.61</Text>
            </PanelHead>
            <ScaleLabel $top={6}><Text w={42} size={18} color="#999">10.62</Text></ScaleLabel>
          </Panel>
        </Charts>

        <Book>
          <BookHead $h={30} $shift={8}><Text w={75} size={15.5} color={RED}>全景500档</Text></BookHead>
          <Levels $top={6}>
            {sells.map((r) => <LevelRow key={r[0]} row={r} bg="#c5e9ea" />)}
          </Levels>
          <Ratio><RatioPart $bg={RED} /><RatioPart $bg={TEAL} /></Ratio>
          <Levels $top={4} $bottom={9}>
            {buys.map((r) => <LevelRow key={r[0]} row={r} bg="#f9d0d5" />)}
          </Levels>
          <BookHead $h={35} $shift={2}>
            <Text w={45} size={22} color={GREY}>明细</Text>
            <svg width="9" height="6" viewBox="0 0 9 6"><path d="M4.500 0L9 6H0Z" fill="#666" /></svg>
          </BookHead>
          <Trades>
            {trades.map((t, i) => (
              <Trade key={i}>
                <Text w={46} size={18} color="#555">{t[0]}</Text>
                <Text w={37} size={18} color={RED}>{t[1]}</Text>
                <Text w={49} size={16.5} color={t[3]}>{t[2]}</Text>
              </Trade>
            ))}
          </Trades>
        </Book>
      </Market>

      <CommentBar>
        <CommentInput>
          <BulletToggle>
            <svg width="34" height="38" viewBox="0 0 34 38" fontFamily={FONT}>
              <text x="1" y="26.500" fontSize="25" fontWeight="700" fill="#4a4a4a">弹</text>
              <circle cx="25.500" cy="25" r="7" fill="#e03c3c" stroke="#fff" />
              <path d="M22 25L24.800 27.700L29 23" stroke="#fff" strokeWidth="1.800" fill="none" />
            </svg>
          </BulletToggle>
          <Text w={155} size={19.5} color="#8c8c8c">发条弹幕见证A股</Text>
        </CommentInput>
        <VoteGroup>
          <Vote $up><Text w={79} size={18.5} color="#df4343">看涨 60%</Text></Vote>
          <Vote><Text w={79} size={18.5} color="#1b8d94">看跌 40%</Text></Vote>
        </VoteGroup>
      </CommentBar>
      <Band $h={5} />

      <ForumTabs>
        <Tab><Text w={77} size={22} color={GREY}>Level-2</Text></Tab>
        <Tab><Text w={45} size={22.5} color={GREY}>看点</Text></Tab>
        <Tab><Text w={46} size={22.5} color={GREY}>资讯</Text></Tab>
        <Tab><Text w={46} size={22.5} color={GREY}>盘口</Text></Tab>
        <Tab><Text w={45} size={22.5} color={GREY}>资金</Text></Tab>
        <Tab $mark="#f0514f" $markTop={36} $markLeft={10} $markW={30}><Text w={50} size={25} weight={700}>论股</Text></Tab>
        <Tab><Text w={46} size={22.5} color={GREY}>简况</Text></Tab>
      </ForumTabs>
      <FilterRow>
        <Tab $mark="#dc3236" $markTop={35} $markLeft={11} $markW={25}><Text w={48} size={24} weight={700}>最新</Text></Tab>
        <Tab><Text w={46} size={22.5} color={GREY}>推荐</Text></Tab>
        <svg width="24" height="28" viewBox="0 0 24 28" fill="none" stroke="#555" strokeWidth="1.500">
          <path d="M11 27L10.500 21.500Q2.500 20 2 11.500Q3 2 12 1.500Q21 2 22 11.500Q21.500 20 11 27Z" />
          <circle cx="12" cy="11.500" r="4.800" />
        </svg>
        <svg width="28" height="28" viewBox="0 0 28 28" fill="none" stroke="#555" strokeWidth="1.500">
          <rect x="1" y="3" width="26" height="22" rx="1.500" />
          <path d="M2 9L14 15.500L26 9" />
        </svg>
        <svg width="26" height="28" viewBox="0 0 26 28" fill="none" stroke="#555" strokeWidth="1.500">
          <circle cx="13" cy="8" r="6.500" />
          <path d="M9 14Q2 17 1.500 24Q1.500 26.500 4 26.500H22Q24.500 26.500 24.500 24Q24 17 17 14" />
        </svg>
        <svg width="30" height="28" viewBox="0 0 30 28" fill="none" stroke="#444" strokeWidth="1.600">
          <path d="M25.500 19A12.500 12.500 0 1 1 26.500 13" />
          <path d="M23.500 13H29L26.500 16.500Z" fill="#333" strokeWidth=".6" />
        </svg>
      </FilterRow>
      <SortRow>
        <SortLabel><Text w={67} size={16.5} color="#888">内容排序</Text></SortLabel>
        <Segmented>
          <Segment $on><Text w={73} size={18} color="#d6383c">最新回复</Text></Segment>
          <Segment><Text w={73} size={18} color="#666">最新发布</Text></Segment>
        </Segmented>
      </SortRow>

      <BottomBar>
        <Sector>
          <svg width="15" height="9" viewBox="0 0 15 9"><path d="M7.500 0L15 9H0Z" fill="#bbb" /></svg>
          <SectorName><Text w={127} size={21} color="#9a9a9a">公路铁路运输</Text></SectorName>
          <Text w={54} size={20} color="#d4191d">1.86%</Text>
        </Sector>
        <Action>{navIcons.order}<Text w={41} size={20.5} color="#e6e6e6">下单</Text></Action>
        <Action>{navIcons.doctor}<Text w={41} size={20.5} color="#e6e6e6">诊股</Text></Action>
        <Action>{navIcons.add}<Text w={63} size={20.5} color="#e6e6e6">加自选</Text></Action>
        <Action>{navIcons.more}<Text w={41} size={20.5} color="#e6e6e6">功能</Text></Action>
        <Watermark>
          <Text w={413} size={49} color="rgba(255,255,255,.24)" weight={700}>BBS.NGA.CN</Text>
        </Watermark>
      </BottomBar>
    </Page>
  );
}
